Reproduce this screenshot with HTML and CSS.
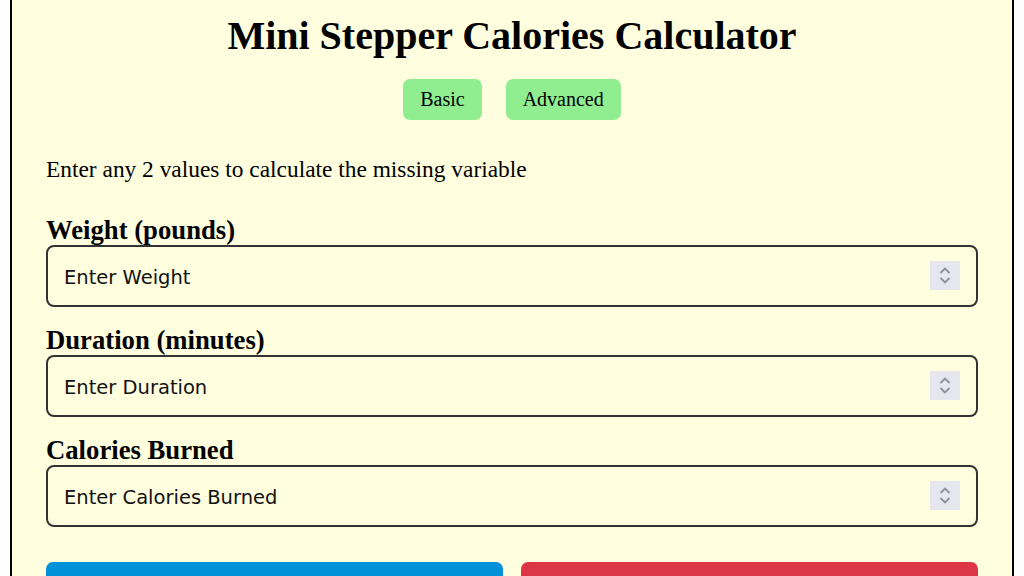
FILE: index.html
```html
<!DOCTYPE html>
<html lang="en">
<head>
<meta charset="utf-8">
<title>Mini Stepper Calories Calculator</title>
<link rel="stylesheet" href="styles.css">
</head>
<body>
<div class="page">
  <h1 class="title">Mini Stepper Calories Calculator</h1>
  <div class="tabs">
    <button class="tab">Basic</button>
    <button class="tab">Advanced</button>
  </div>
  <p class="intro">Enter any 2 values to calculate the missing variable</p>
  <div class="field">
    <label class="label" for="weight">Weight (pounds)</label>
    <div class="input-wrap">
      <input class="input" id="weight" type="number" placeholder="Enter Weight">
      <span class="spin"><svg width="30" height="29" viewBox="0 0 30 29"><path d="M10.5 12 L15 7.5 L19.5 12" fill="none" stroke="#8c919b" stroke-width="1.8"/><path d="M10.5 17 L15 21.5 L19.5 17" fill="none" stroke="#8c919b" stroke-width="1.8"/></svg></span>
    </div>
  </div>
  <div class="field">
    <label class="label" for="duration">Duration (minutes)</label>
    <div class="input-wrap">
      <input class="input" id="duration" type="number" placeholder="Enter Duration">
      <span class="spin"><svg width="30" height="29" viewBox="0 0 30 29"><path d="M10.5 12 L15 7.5 L19.5 12" fill="none" stroke="#8c919b" stroke-width="1.8"/><path d="M10.5 17 L15 21.5 L19.5 17" fill="none" stroke="#8c919b" stroke-width="1.8"/></svg></span>
    </div>
  </div>
  <div class="field">
    <label class="label" for="calories">Calories Burned</label>
    <div class="input-wrap">
      <input class="input" id="calories" type="number" placeholder="Enter Calories Burned">
      <span class="spin"><svg width="30" height="29" viewBox="0 0 30 29"><path d="M10.5 12 L15 7.5 L19.5 12" fill="none" stroke="#8c919b" stroke-width="1.8"/><path d="M10.5 17 L15 21.5 L19.5 17" fill="none" stroke="#8c919b" stroke-width="1.8"/></svg></span>
    </div>
  </div>
  <div class="actions">
    <button class="btn btn-calc">Calculate</button>
    <button class="btn btn-clear">Clear</button>
  </div>
</div>
</body>
</html>
```
FILE: styles.css
```css
html, body {
  margin: 0;
  padding: 0;
  background: #ffffff;
}
.page {
  margin: 0 10px;
  background: #ffffe0;
  border-left: 2px solid #000;
  border-right: 2px solid #000;
  padding: 13px 34px 40px;
  font-family: "Liberation Serif", "Times New Roman", serif;
  color: #000;
  min-height: 700px;
}
.title {
  margin: 0;
  text-align: center;
  font-size: 40px;
  font-weight: bold;
  line-height: 46px;
}
.tabs {
  display: flex;
  justify-content: center;
  gap: 24px;
  margin-top: 20px;
}
.tab {
  background: #90ee90;
  border: none;
  border-radius: 7px;
  padding: 0 17px;
  height: 41px;
  font-family: "Liberation Serif", "Times New Roman", serif;
  font-size: 20px;
  color: #000;
}
.intro {
  margin: 36px 0 0;
  font-size: 23.4px;
  line-height: 26px;
}
.field {
  display: flex;
  flex-direction: column;
  margin-top: 34px;
}
.field + .field {
  margin-top: 19px;
}
.label {
  font-size: 26.7px;
  font-weight: bold;
  line-height: 29px;
}
.input-wrap {
  position: relative;
}
.input {
  display: block;
  width: 100%;
  box-sizing: border-box;
  height: 62px;
  margin: 0;
  border: 2px solid #333;
  border-radius: 8px;
  background: #ffffe0;
  padding: 2px 16px 0;
  font-family: "DejaVu Sans", Verdana, sans-serif;
  font-size: 19.5px;
  color: #000;
  -moz-appearance: textfield;
  appearance: textfield;
}
.input::-webkit-inner-spin-button,
.input::-webkit-outer-spin-button {
  -webkit-appearance: none;
  margin: 0;
}
.input::placeholder {
  color: #111;
  opacity: 1;
}
.spin {
  position: absolute;
  right: 18px;
  top: 16px;
  width: 30px;
  height: 29px;
  background: #e6e6ee;
  pointer-events: none;
}
.spin svg {
  display: block;
}
.actions {
  display: flex;
  gap: 18px;
  margin-top: 35px;
}
.btn {
  flex: 1;
  height: 66px;
  border: none;
  border-radius: 7px;
  color: #fff;
  font-family: "Liberation Serif", "Times New Roman", serif;
  font-size: 20px;
}
.btn-calc { background: #0091d8; }
.btn-clear { background: #dc3545; }
```
